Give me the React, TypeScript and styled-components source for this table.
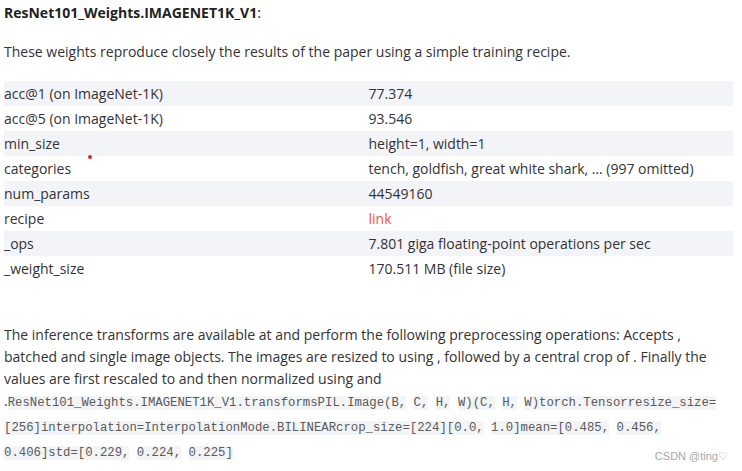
import React from 'react';
import styled, { createGlobalStyle } from 'styled-components';

const GlobalStyle = createGlobalStyle`
    html, body {
        margin: 0;
        padding: 0;
        background: #fff;
    }
    body {
        font-family: 'Open Sans', 'Noto Sans', sans-serif;
        color: #333;
    }
`;

const Page = styled.div`
    position: relative;
    width: 742px;
    height: 471px;
    box-sizing: border-box;
    padding: 2px 9px 0 4px;
    overflow: hidden;
`;

const Heading = styled.h3`
    margin: 0;
    font-size: 14px;
    line-height: 22px;
    font-weight: 400;
    color: #222;

    strong {
        font-weight: 700;
    }
`;

const Paragraph = styled.p<{ $top: number }>`
    margin: ${props => props.$top}px 0 0;
    font-size: 14px;
    line-height: 22px;
    color: #333;
`;

const Table = styled.table`
    margin-top: 18px;
    width: 729px;
    border-collapse: collapse;
    table-layout: fixed;
    font-size: 14px;
    color: #333;
`;

const Row = styled.tr`
    height: 25px;
    &:nth-child(odd) {
        background-color: #f3f4f7;
    }
`;

const Cell = styled.td`
    padding: 0;
    line-height: 25px;
    vertical-align: middle;
    white-space: nowrap;
`;

const TextLink = styled.a`
    color: #fc5531;
    text-decoration: none;
`;

const CodeBlock = styled.span`
    font-family: 'Liberation Mono', monospace;
    font-size: 12.3px;
    line-height: 24px;
`;

const Code = styled.code`
    font-family: inherit;
    background-color: #f3f4f6;
    color: #5a5a5a;
`;

const Watermark = styled.div`
    position: absolute;
    right: 14px;
    bottom: 8px;
    font-family: 'Liberation Sans', Arial, sans-serif;
    font-size: 11px;
    color: #a8a8a8;
`;

const Dot = styled.span`
    position: absolute;
    left: 88px;
    top: 155px;
    width: 4px;
    height: 4px;
    border-radius: 50%;
    background: #e8202a;
`;

const rows: [string, React.ReactNode][] = [
    ['acc@1 (on ImageNet-1K)', '77.374'],
    ['acc@5 (on ImageNet-1K)', '93.546'],
    ['min_size', 'height=1, width=1'],
    ['categories', 'tench, goldfish, great white shark, … (997 omitted)'],
    ['num_params', '44549160'],
    ['recipe', <TextLink href="#">link</TextLink>],
    ['_ops', '7.801 giga floating-point operations per sec'],
    ['_weight_size', '170.511 MB (file size)'],
];

const codeText =
    'ResNet101_Weights.IMAGENET1K_V1.transformsPIL.Image(B, C, H, W)(C, H, W)torch.Tensorresize_size=[256]interpolation=InterpolationMode.BILINEARcrop_size=[224][0.0, 1.0]mean=[0.485, 0.456, 0.406]std=[0.229, 0.224, 0.225]';

export default function App() {
    const tokens = codeText.split(' ');
    return (
        <Page>
            <GlobalStyle />
            <Heading>
                <strong>ResNet101_Weights.IMAGENET1K_V1</strong>:
            </Heading>
            <Paragraph $top={17}>
                These weights reproduce closely the results of the paper using a simple training recipe.
            </Paragraph>
            <Table>
                <tbody>
                    {rows.map(([label, value]) => (
                        <Row key={label}>
                            <Cell>{label}</Cell>
                            <Cell>{value}</Cell>
                        </Row>
                    ))}
                </tbody>
            </Table>
            <Paragraph $top={43}>
                The inference transforms are available at and perform the following preprocessing
                operations: Accepts , batched and single image objects. The images are resized to
                using , followed by a central crop of . Finally the values are first rescaled to and
                then normalized using and .
                <CodeBlock>
                    {tokens.map((t, i) => (
                        <React.Fragment key={i}>
                            <Code>{t}</Code>
                            {i < tokens.length - 1 ? ' ' : ''}
                        </React.Fragment>
                    ))}
                </CodeBlock>
            </Paragraph>
            <Dot />
            <Watermark>CSDN @ting♡</Watermark>
        </Page>
    );
}
